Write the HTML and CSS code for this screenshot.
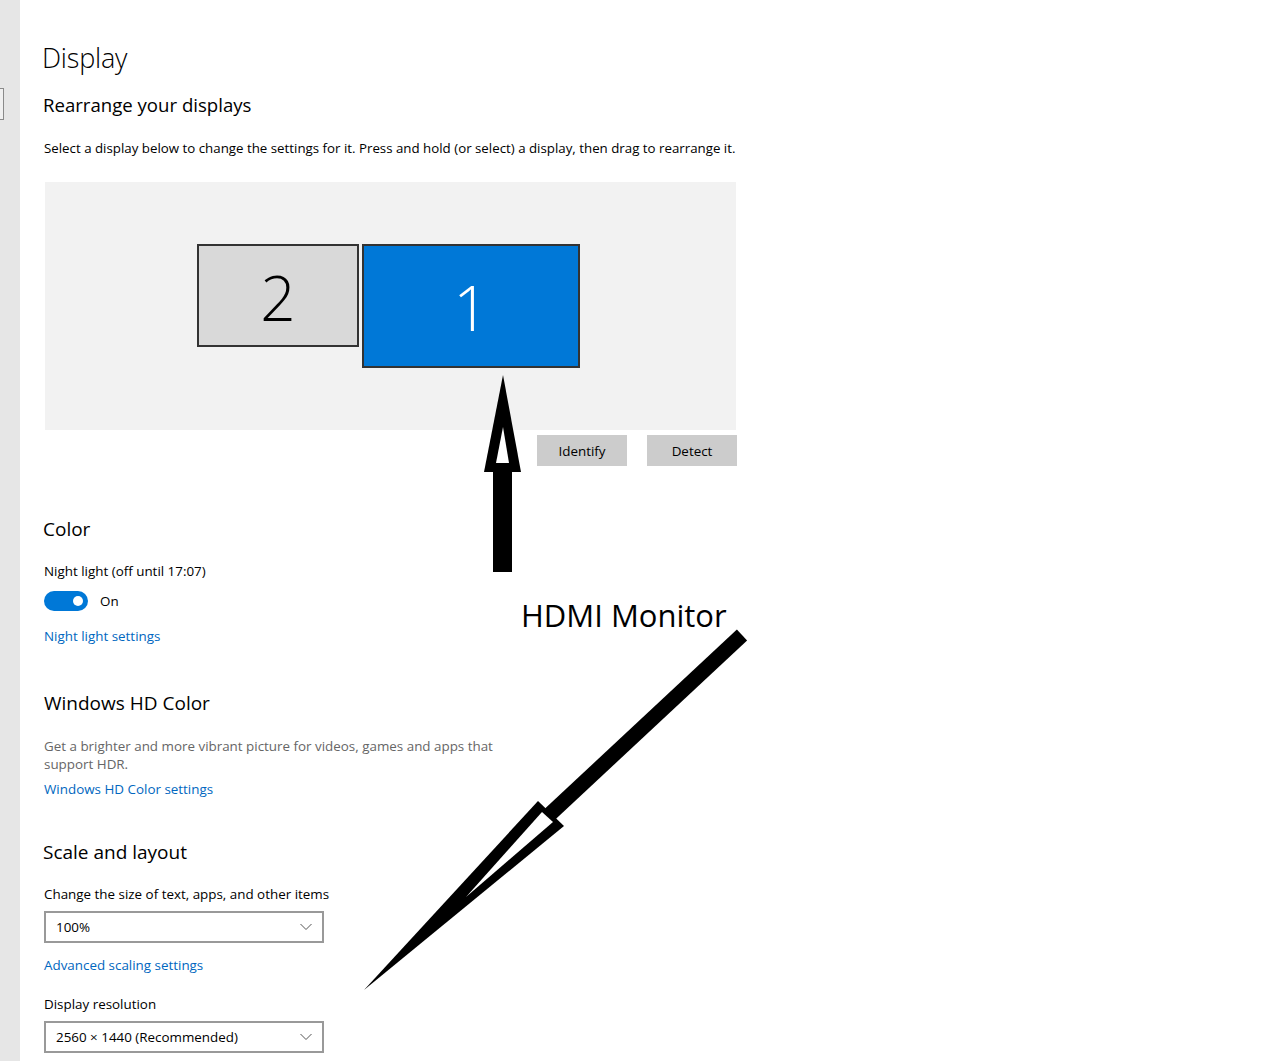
FILE: index.html
```html
<!DOCTYPE html>
<html>
<head>
<meta charset="utf-8">
<link rel="stylesheet" href="styles.css">
</head>
<body>
<div class="page">
  <aside class="sidebar"><div class="stub"></div></aside>
  <main class="content">
    <h1 class="title">Display</h1>
    <h2 class="heading h-rearrange">Rearrange your displays</h2>
    <p class="text desc">Select a display below to change the settings for it. Press and hold (or select) a display, then drag to rearrange it.</p>
    <div class="panel">
      <div class="monitor m2"><span>2</span></div>
      <div class="monitor m1"><span>1</span></div>
    </div>
    <div class="buttons">
      <button class="btn">Identify</button>
      <button class="btn">Detect</button>
    </div>

    <h2 class="heading h-color">Color</h2>
    <p class="text label">Night light (off until 17:07)</p>
    <div class="toggle-row">
      <span class="toggle"><span class="knob"></span></span>
      <span class="text">On</span>
    </div>
    <a class="link l-night">Night light settings</a>

    <h2 class="heading h-hd">Windows HD Color</h2>
    <p class="text muted">Get a brighter and more vibrant picture for videos, games and apps that support HDR.</p>
    <a class="link l-hd">Windows HD Color settings</a>

    <h2 class="heading h-scale">Scale and layout</h2>
    <p class="text label">Change the size of text, apps, and other items</p>
    <div class="select"><span>100%</span><svg class="chev" width="12" height="8" viewBox="0 0 12 8"><path d="M0.5 1 L6 6.5 L11.5 1" fill="none" stroke="#555" stroke-width="1"/></svg></div>
    <a class="link l-adv">Advanced scaling settings</a>
    <p class="text label l-res">Display resolution</p>
    <div class="select"><span>2560 × 1440 (Recommended)</span><svg class="chev" width="12" height="8" viewBox="0 0 12 8"><path d="M0.5 1 L6 6.5 L11.5 1" fill="none" stroke="#555" stroke-width="1"/></svg></div>
  </main>

  <svg class="annot" width="1280" height="1061" viewBox="0 0 1280 1061">
    <polygon points="503,375 484,472 521,472" fill="#000"/>
    <polygon points="503,427 496,463 509,463" fill="#fff"/>
    <rect x="493" y="470" width="19" height="102" fill="#000"/>
    <line x1="742" y1="635" x2="548" y2="816" stroke="#000" stroke-width="15"/>
    <polygon points="538,801 564,826 364,990" fill="#000"/>
    <polygon points="542,812 553,822 466,897" fill="#fff"/>
  </svg>
  <div class="hdmi">HDMI Monitor</div>
</div>
</body>
</html>
```
FILE: styles.css
```css
* { box-sizing: border-box; }
html, body { margin: 0; padding: 0; background: #fff; }
body {
  font-family: "Open Sans", "Noto Sans", "Liberation Sans", sans-serif;
  color: #000;
  width: 1280px;
  height: 1061px;
  overflow: hidden;
}
.page {
  position: relative;
  display: flex;
  width: 1280px;
  height: 1061px;
}
.sidebar {
  width: 20px;
  flex: none;
  background: #e6e6e6;
  height: 100%;
}
.stub {
  margin-top: 88px;
  width: 4px;
  height: 32px;
  border: 1px solid #8a8a8a;
  border-left: none;
  background: #f0f0f0;
}
.content {
  padding-left: 22px;
  width: 740px;
  display: flex;
  flex-direction: column;
  align-items: flex-start;
}
.title {
  margin: 40px 0 0 0;
  font-size: 27px;
  font-weight: 300;
  line-height: 36px;
  letter-spacing: -0.2px;
}
.heading {
  margin: 0 0 0 1px;
  font-size: 19px;
  font-weight: 400;
  line-height: 26px;
}
.h-rearrange { margin-top: 16px; font-size: 18.6px; }
.text {
  margin: 0;
  font-size: 13.4px;
  line-height: 18px;
}
.desc { margin: 21px 0 0 2px; font-size: 13.3px; }
.panel {
  margin: 25px 0 0 3px;
  width: 691px;
  height: 248px;
  background: #f2f2f2;
  display: flex;
  align-items: flex-start;
  padding: 62px 0 0 152px;
  gap: 3px;
}
.monitor {
  border: 2px solid #333;
  display: flex;
  align-items: center;
  justify-content: center;
  font-weight: 300;
}
.m2 {
  width: 162px;
  height: 103px;
  background: #d9d9d9;
  color: #000;
  font-size: 62px;
}
.m1 {
  width: 218px;
  height: 124px;
  background: #0078d7;
  color: #fff;
  font-size: 62px;
}
.monitor span { line-height: 1; margin-top: 2px; }
.buttons {
  margin-top: 5px;
  width: 695px;
  display: flex;
  justify-content: flex-end;
  gap: 20px;
}
.btn {
  width: 90px;
  height: 31px;
  border: none;
  background: #cccccc;
  font-family: inherit;
  font-size: 13.4px;
  color: #000;
  padding: 0;
}
.h-color { margin-top: 50px; }
.label { margin-left: 2px; margin-top: 20px; }
.toggle-row {
  margin: 11px 0 0 2px;
  display: flex;
  align-items: center;
  gap: 12px;
}
.toggle {
  width: 44px;
  height: 20px;
  border-radius: 10px;
  background: #0078d7;
  position: relative;
  display: block;
}
.knob {
  position: absolute;
  right: 5px;
  top: 5px;
  width: 10px;
  height: 10px;
  border-radius: 50%;
  background: #fff;
}
.link {
  font-size: 13.4px;
  line-height: 18px;
  color: #0067c0;
  margin-left: 2px;
  text-decoration: none;
}
.l-night { margin-top: 16px; }
.h-hd { margin-top: 45px; margin-left: 2px; }
.muted { color: #666; margin: 21px 0 0 2px; width: 470px; }
.l-hd { margin-top: 7px; }
.h-scale { margin-top: 41px; }
.select {
  margin: 8px 0 0 2px;
  width: 280px;
  height: 32px;
  border: 2px solid #999;
  display: flex;
  align-items: center;
  justify-content: space-between;
  padding: 0 10px 0 10px;
  font-size: 13.4px;
}
.chev { display: block; }
.l-adv { margin-top: 13px; }
.l-res { margin-top: 21px; }
.annot {
  position: absolute;
  left: 0;
  top: 0;
  pointer-events: none;
}
.hdmi {
  position: absolute;
  left: 521px;
  top: 595px;
  font-size: 31px;
  line-height: 40px;
  font-weight: 400;
}
```
